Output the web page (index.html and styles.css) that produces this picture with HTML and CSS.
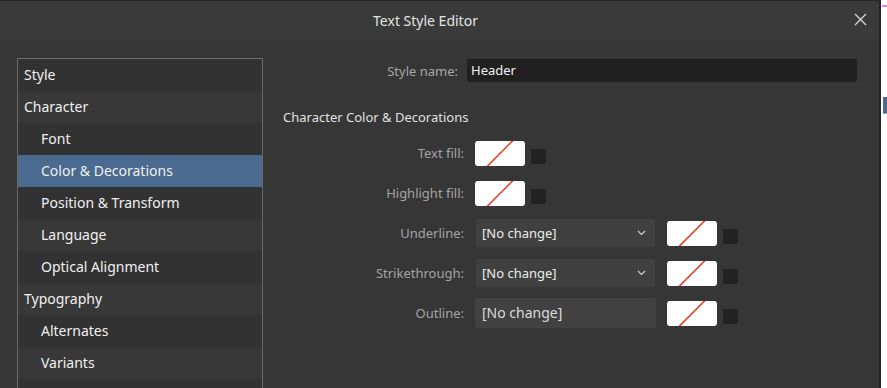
FILE: index.html
```html
<!DOCTYPE html>
<html lang="en">
<head>
    <meta charset="UTF-8">
    <title>Text Style Editor</title>
    <link rel="stylesheet" href="styles.css">
</head>
<body>
    <div class="backdrop-tab"></div>
    <div class="backdrop-pink"></div>

    <div class="dialog">
        <div class="titlebar">
            <span class="title">Text Style Editor</span>
            <svg class="close" width="13" height="13" viewBox="0 0 13 13">
                <path d="M1 1 L12 12 M12 1 L1 12" stroke="#d4d4d4" stroke-width="1.4" fill="none"/>
            </svg>
        </div>

        <div class="main">
            <!-- Category list -->
            <div class="sidebar">
                <div class="item">Style</div>
                <div class="item">Character</div>
                <div class="item sub">Font</div>
                <div class="item sub selected">Color &amp; Decorations</div>
                <div class="item sub">Position &amp; Transform</div>
                <div class="item sub">Language</div>
                <div class="item sub">Optical Alignment</div>
                <div class="item">Typography</div>
                <div class="item sub">Alternates</div>
                <div class="item sub">Variants</div>
                <div class="item"></div>
            </div>

            <!-- Settings -->
            <div class="panel">
                <div class="name-row">
                    <span class="name-label">Style name:</span>
                    <div class="name-input">Header</div>
                </div>

                <div class="section-title">Character Color &amp; Decorations</div>

                <div class="row">
                    <span class="label">Text fill:</span>
                    <div class="swatch"><svg width="50" height="25" viewBox="0 0 50 25"><line x1="12" y1="25.5" x2="38" y2="-0.5" stroke="#e8341c" stroke-width="1.5"/></svg></div>
                    <div class="toggle"></div>
                </div>
                <div class="row">
                    <span class="label">Highlight fill:</span>
                    <div class="swatch"><svg width="50" height="25" viewBox="0 0 50 25"><line x1="12" y1="25.5" x2="38" y2="-0.5" stroke="#e8341c" stroke-width="1.5"/></svg></div>
                    <div class="toggle"></div>
                </div>
                <div class="row">
                    <span class="label">Underline:</span>
                    <div class="select">
                        <span>[No change]</span>
                        <svg width="9" height="6" viewBox="0 0 9 6"><polyline points="1,1 4.5,4.5 8,1" stroke="#cfcfcf" stroke-width="1.2" fill="none"/></svg>
                    </div>
                    <div class="swatch"><svg width="50" height="25" viewBox="0 0 50 25"><line x1="12" y1="25.5" x2="38" y2="-0.5" stroke="#e8341c" stroke-width="1.5"/></svg></div>
                    <div class="toggle"></div>
                </div>
                <div class="row">
                    <span class="label">Strikethrough:</span>
                    <div class="select">
                        <span>[No change]</span>
                        <svg width="9" height="6" viewBox="0 0 9 6"><polyline points="1,1 4.5,4.5 8,1" stroke="#cfcfcf" stroke-width="1.2" fill="none"/></svg>
                    </div>
                    <div class="swatch"><svg width="50" height="25" viewBox="0 0 50 25"><line x1="12" y1="25.5" x2="38" y2="-0.5" stroke="#e8341c" stroke-width="1.5"/></svg></div>
                    <div class="toggle"></div>
                </div>
                <div class="row">
                    <span class="label">Outline:</span>
                    <div class="text-box">[No change]</div>
                    <div class="swatch"><svg width="50" height="25" viewBox="0 0 50 25"><line x1="12" y1="25.5" x2="38" y2="-0.5" stroke="#e8341c" stroke-width="1.5"/></svg></div>
                    <div class="toggle"></div>
                </div>
            </div>
        </div>
    </div>
</body>
</html>
```

FILE: styles.css
```css
body {
    margin: 0;
    background: #ffffff;
    font-family: "Noto Sans", "Open Sans", sans-serif;
    width: 887px;
    height: 388px;
    overflow: hidden;
    position: relative;
}

/* bits of other windows peeking out behind the dialog */
.backdrop-tab {
    position: absolute;
    left: 883px;
    top: 97px;
    width: 10px;
    height: 16px;
    background: #4b6a8f;
    border-bottom: 1px solid #8aa0bd;
}

.backdrop-pink {
    position: absolute;
    left: 882px;
    top: 5px;
    width: 10px;
    height: 2px;
    background: #e27fe6;
}

.dialog {
    margin-left: -28px;
    width: 909px;
    height: 388px;
    background: #363636;
    border-right: 2px solid #242424;
    border-top: 1px solid #262626;
    box-sizing: border-box;
    display: flex;
    flex-direction: column;
    position: relative;
    overflow: hidden;
}

.titlebar {
    height: 39px;
    flex-shrink: 0;
    display: flex;
    align-items: center;
    justify-content: center;
    background: #3a3a3a;
    position: relative;
}

.title {
    color: #e4e4e4;
    font-size: 14px;
}

.close {
    position: absolute;
    right: 12px;
    top: 12px;
}

.main {
    display: flex;
    flex: 1;
    padding-top: 18px;
    padding-left: 45px;
}

.sidebar {
    width: 244px;
    border: 1px solid #6b6b6b;
    border-bottom: none;
    flex-shrink: 0;
    overflow: hidden;
}

.item {
    height: 32px;
    line-height: 32px;
    padding-left: 6px;
    color: #f0f0f0;
    font-size: 14px;
    background: #323232;
}

.item:nth-child(even) {
    background: #383838;
}

.item.sub {
    padding-left: 23px;
}

.item.selected {
    background: #4a6a8f;
}

.panel {
    margin-left: 20px;
    display: flex;
    flex-direction: column;
}

.name-row {
    display: flex;
    align-items: center;
    margin-top: 1px;
    height: 23px;
}

.name-label {
    width: 175px;
    text-align: right;
    margin-right: 9px;
    color: #a8a8a8;
    font-size: 13px;
}

.name-input {
    width: 386px;
    height: 23px;
    line-height: 23px;
    padding-left: 4px;
    background: #202020;
    border-radius: 2px;
    color: #f0f0f0;
    font-size: 13px;
}

.section-title {
    margin-top: 24px;
    height: 22px;
    line-height: 22px;
    color: #e0e0e0;
    font-size: 13px;
}

.row {
    display: flex;
    align-items: center;
    height: 40px;
}

.section-title + .row {
    margin-top: 5px;
}

.label {
    width: 181px;
    margin-right: 11px;
    text-align: right;
    color: #a4a4a4;
    font-size: 13px;
}

.swatch {
    width: 50px;
    height: 25px;
    background: #ffffff;
    border-radius: 3px;
    overflow: hidden;
}

.swatch svg {
    display: block;
}

.toggle {
    width: 15px;
    height: 15px;
    margin-left: 6px;
    margin-top: 6px;
    background: #222222;
    border-radius: 2px;
}

.select {
    width: 179px;
    height: 28px;
    margin-left: 1px;
    margin-right: 12px;
    padding: 0 9px 0 6px;
    box-sizing: border-box;
    background: #404040;
    border-radius: 2px;
    display: flex;
    align-items: center;
    justify-content: space-between;
    color: #ececec;
    font-size: 13px;
}

.text-box {
    width: 181px;
    height: 30px;
    line-height: 30px;
    margin-right: 11px;
    padding-left: 7px;
    box-sizing: border-box;
    background: #414141;
    border-radius: 2px;
    color: #dcdcdc;
    font-size: 14px;
}
```
